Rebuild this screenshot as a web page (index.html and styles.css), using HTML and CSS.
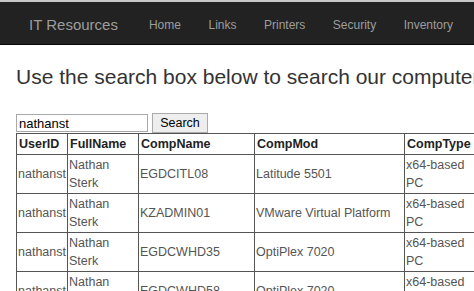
FILE: index.html
```
<!DOCTYPE html>
<html lang="en">
<head>
    <meta charset="UTF-8">
    <title>IT Resources - Inventory</title>
    <link rel="stylesheet" href="styles.css">
</head>
<body>
    <div class="navbar">
        <span class="brand">IT Resources</span>
        <a href="#">Home</a>
        <a href="#">Links</a>
        <a href="#">Printers</a>
        <a href="#">Security</a>
        <a href="#">Inventory</a>
    </div>

    <div class="content">
        <h2>Use the search box below to search our computer inventory.</h2>

        <form class="search">
            <input type="text" value="nathanst">
            <button type="button">Search</button>
        </form>

        <table class="results">
            <colgroup>
                <col class="c-user">
                <col class="c-name">
                <col class="c-comp">
                <col class="c-mod">
                <col class="c-type">
            </colgroup>
            <tr>
                <th>UserID</th>
                <th>FullName</th>
                <th>CompName</th>
                <th>CompMod</th>
                <th>CompType</th>
            </tr>
            <tr>
                <td>nathanst</td>
                <td>Nathan Sterk</td>
                <td>EGDCITL08</td>
                <td>Latitude 5501</td>
                <td>x64-based PC</td>
            </tr>
            <tr>
                <td>nathanst</td>
                <td>Nathan Sterk</td>
                <td>KZADMIN01</td>
                <td>VMware Virtual Platform</td>
                <td>x64-based PC</td>
            </tr>
            <tr>
                <td>nathanst</td>
                <td>Nathan Sterk</td>
                <td>EGDCWHD35</td>
                <td>OptiPlex 7020</td>
                <td>x64-based PC</td>
            </tr>
            <tr>
                <td>nathanst</td>
                <td>Nathan Sterk</td>
                <td>EGDCWHD58</td>
                <td>OptiPlex 7020</td>
                <td>x64-based PC</td>
            </tr>
        </table>
    </div>
</body>
</html>
```
FILE: styles.css
```
body {
    margin: 0;
    font-family: "Liberation Sans", Arial, sans-serif;
    color: #333;
    background: #fff;
    overflow: hidden;
}
.navbar {
    display: flex;
    align-items: center;
    height: 39px;
    padding-top: 3px;
    background-color: #222;
    border-top: 2px solid #c8c8c8;
    border-bottom: 1px solid #080808;
    padding-left: 29px;
    white-space: nowrap;
}
.brand {
    font-size: 15px;
    color: #9d9d9d;
    margin-right: 31px;
}
.navbar a {
    font-size: 12px;
    color: #9d9d9d;
    text-decoration: none;
    margin-right: 27.5px;
}
.content {
    padding-left: 16px;
}
h2 {
    font-size: 21px;
    font-weight: normal;
    white-space: nowrap;
    margin: 20px 0 24px;
}
.search {
    display: flex;
    align-items: center;
    gap: 4px;
    margin: 0;
    height: 20px;
}
.search input {
    width: 126px;
    height: 14px;
    padding: 1px 2px;
    border: 1px solid #a9a9a9;
    font-family: inherit;
    font-size: 13px;
    color: #000;
}
.search button {
    height: 20px;
    width: 56px;
    padding: 0;
    border: 1px solid #aaa;
    background: #eee;
    font-family: inherit;
    font-size: 12.5px;
    color: #000;
}
.results {
    border-collapse: collapse;
    table-layout: fixed;
    width: 470px;
    font-size: 12.5px;
}
.c-user { width: 51px; }
.c-name { width: 71px; }
.c-comp { width: 116px; }
.c-mod { width: 150px; }
.c-type { width: 82px; }
.results th,
.results td {
    border: 1px solid #555;
    padding: 1px 1px;
    text-align: left;
    line-height: 18px;
}
.results th {
    padding: 1px 2px;
    color: #222;
}
.results td {
    color: #555;
}
```
